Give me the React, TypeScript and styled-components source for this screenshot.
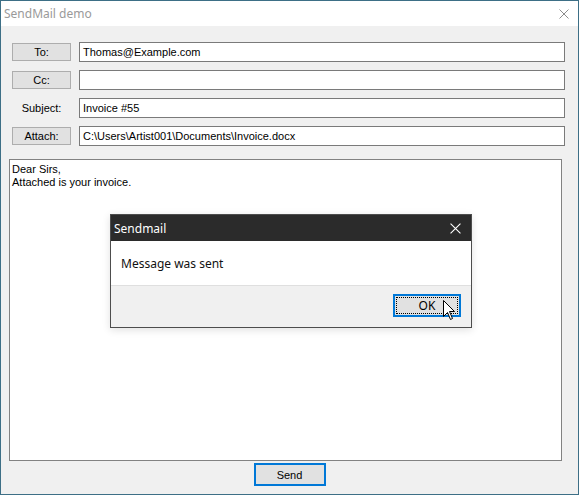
import React from 'react';
import styled, { createGlobalStyle } from 'styled-components';

const GlobalStyle = createGlobalStyle`
  html, body { margin: 0; padding: 0; background: #fff; }
  * { box-sizing: border-box; }
`;

const Window = styled.div`
  position: relative;
  width: 579px;
  height: 495px;
  display: flex;
  flex-direction: column;
  border: 1px solid #3d6f86;
  background: #f0f0f0;
  font-family: 'Liberation Sans', Arial, sans-serif;
  font-size: 11px;
  color: #000;
`;

const TitleBar = styled.div`
  flex: none;
  height: 25px;
  display: flex;
  align-items: center;
  justify-content: space-between;
  padding: 0 9px 0 3px;
  background: #fff;
  font-family: 'Noto Sans', sans-serif;
  font-size: 12px;
  color: #9a9a9a;
`;

const Client = styled.div`
  flex: 1;
  display: flex;
  flex-direction: column;
  min-height: 0;
`;

const Fields = styled.div`
  display: grid;
  grid-template-columns: 59px 1fr;
  grid-auto-rows: 20px;
  column-gap: 8px;
  row-gap: 8px;
  padding: 16px 13px 0 11px;
`;

const FieldButton = styled.div`
  align-self: center;
  height: 18px;
  display: flex;
  align-items: center;
  justify-content: center;
  background: #e1e1e1;
  border: 1px solid #adadad;
`;

const FieldLabel = styled.div`
  display: flex;
  align-items: center;
  justify-content: center;
`;

const TextBox = styled.div`
  display: flex;
  align-items: center;
  padding-left: 3px;
  background: #fff;
  border: 1px solid #7a7a7a;
  white-space: nowrap;
  overflow: hidden;
`;

const Body = styled.div`
  flex: 1;
  margin: 13px 16px 0 8px;
  padding: 3px 2px;
  background: #fff;
  border: 1px solid #828282;
  line-height: 13px;
`;

const Footer = styled.div`
  flex: none;
  display: flex;
  justify-content: center;
  padding: 2px 0 8px;
`;

const SendButton = styled.div`
  width: 72px;
  height: 23px;
  display: flex;
  align-items: center;
  justify-content: center;
  background: #e1e1e1;
  border: 2px solid #0078d7;
`;

const Dialog = styled.div`
  position: absolute;
  left: 109px;
  top: 213px;
  width: 362px;
  height: 114px;
  display: flex;
  flex-direction: column;
  border: 1px solid #4d4d4d;
  box-shadow: 0 2px 8px rgba(0, 0, 0, 0.12);
  font-family: 'Noto Sans', sans-serif;
  font-size: 12px;
`;

const DialogTitle = styled.div`
  flex: none;
  height: 26px;
  display: flex;
  align-items: center;
  justify-content: space-between;
  padding: 0 10px 0 3px;
  background: #2b2b2b;
  color: #fff;
`;

const DialogMessage = styled.div`
  flex: none;
  height: 45px;
  display: flex;
  align-items: center;
  padding-left: 10px;
  background: #fff;
  color: #111;
  border-bottom: 1px solid #dfdfdf;
`;

const DialogFooter = styled.div`
  flex: 1;
  position: relative;
  display: flex;
  justify-content: flex-end;
  align-items: flex-start;
  padding: 9px 11px 0 0;
  background: #f0f0f0;
`;

const OkButton = styled.div`
  position: relative;
  width: 66px;
  height: 21px;
  display: flex;
  align-items: center;
  justify-content: center;
  background: #e1e1e1;
  border: 1px solid #0078d7;
  outline: 1px solid #0078d7;
  color: #000;

  &::after {
    content: '';
    position: absolute;
    inset: 1px;
    border: 1px dotted #000;
  }
`;

const Cursor = styled.svg`
  position: absolute;
  left: 332px;
  top: 14px;
`;

const CloseIcon: React.FC<{ color: string; size: number }> = ({ color, size }) => (
  <svg width={size} height={size} viewBox="0 0 10 10">
    <path d="M0.5 0.5L9.5 9.5M9.5 0.5L0.5 9.5" stroke={color} strokeWidth="1" fill="none" />
  </svg>
);

const App: React.FC = () => {
  const rows = [
    { label: 'To:', button: true, value: 'Thomas@Example.com' },
    { label: 'Cc:', button: true, value: '' },
    { label: 'Subject:', button: false, value: 'Invoice #55' },
    { label: 'Attach:', button: true, value: 'C:\\Users\\Artist001\\Documents\\Invoice.docx' },
  ];

  return (
    <>
      <GlobalStyle />
      <Window>
        <TitleBar>
          <span>SendMail demo</span>
          <CloseIcon color="#8c8c8c" size={10} />
        </TitleBar>
        <Client>
          <Fields>
            {rows.map((row) => (
              <React.Fragment key={row.label}>
                {row.button ? (
                  <FieldButton>{row.label}</FieldButton>
                ) : (
                  <FieldLabel>{row.label}</FieldLabel>
                )}
                <TextBox>{row.value}</TextBox>
              </React.Fragment>
            ))}
          </Fields>
          <Body>
            Dear Sirs,
            <br />
            Attached is your invoice.
          </Body>
          <Footer>
            <SendButton>Send</SendButton>
          </Footer>
        </Client>

        <Dialog>
          <DialogTitle>
            <span>Sendmail</span>
            <CloseIcon color="#ffffff" size={11} />
          </DialogTitle>
          <DialogMessage>Message was sent</DialogMessage>
          <DialogFooter>
            <OkButton>OK</OkButton>
            <Cursor width="13" height="21" viewBox="0 0 13 21">
              <path
                d="M0.5 0.5L0.5 16.5L4.5 12.5L7.5 19.5L9.5 18.5L6.5 11.5L11.5 11.5Z"
                fill="#fff"
                stroke="#000"
                strokeWidth="1"
                strokeLinejoin="miter"
              />
            </Cursor>
          </DialogFooter>
        </Dialog>
      </Window>
    </>
  );
};

export default App;
